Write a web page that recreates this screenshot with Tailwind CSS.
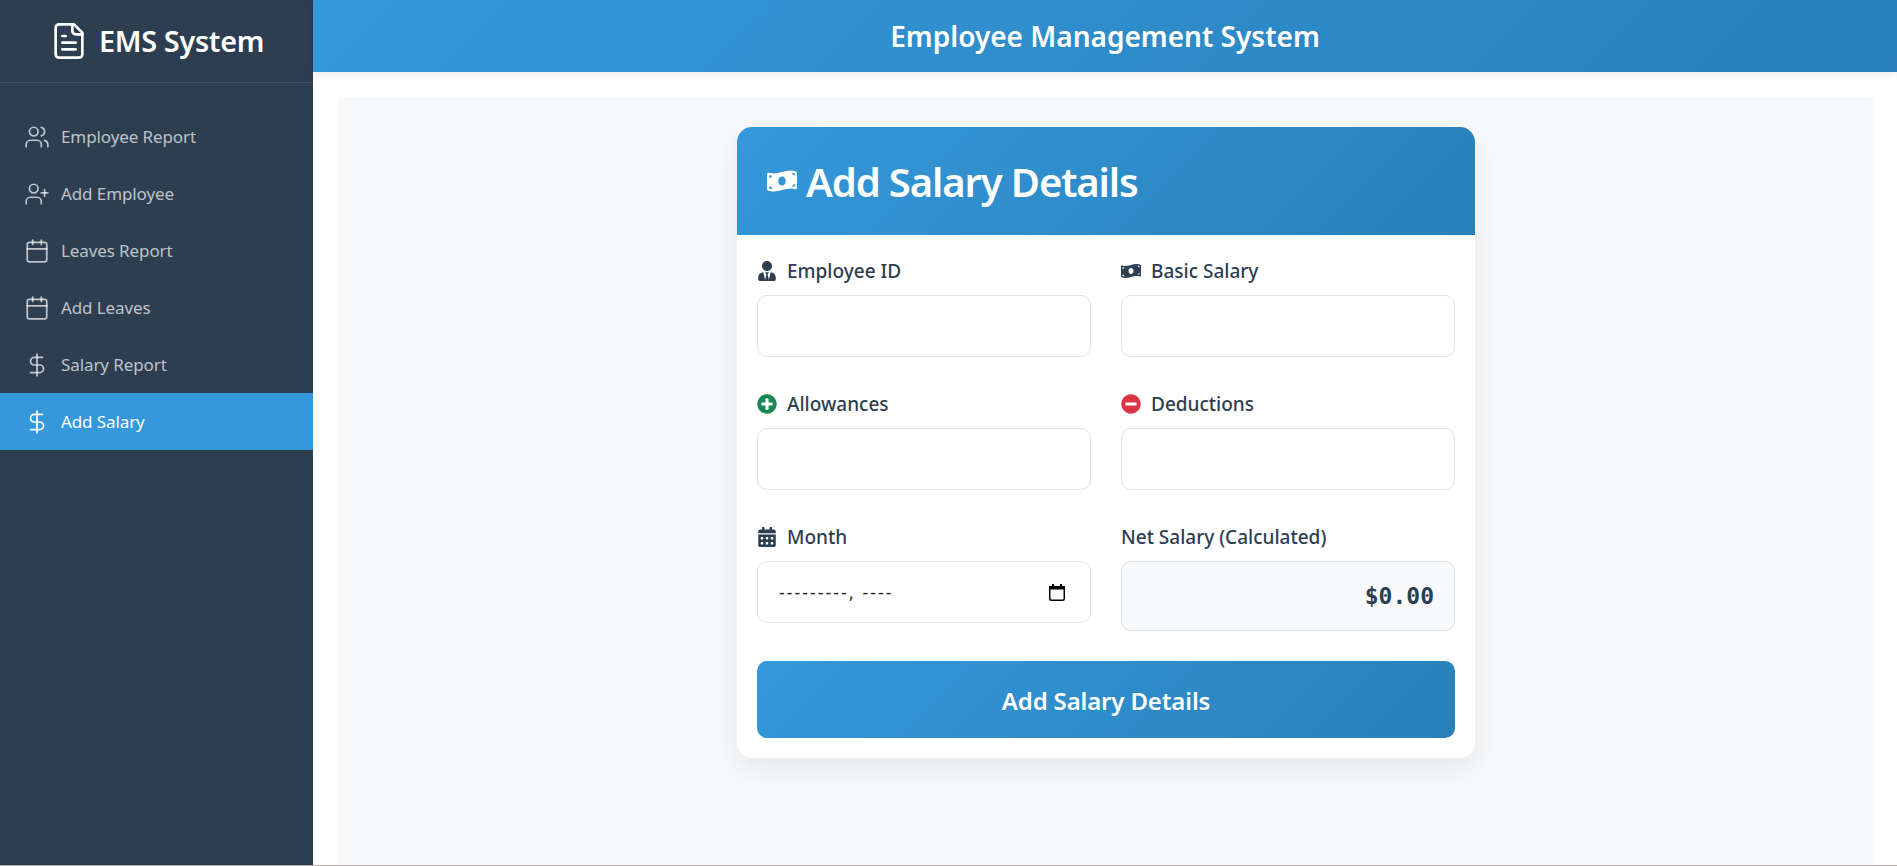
<!DOCTYPE html>
<html lang="en">
<head>
    <meta charset="UTF-8">
    <meta name="viewport" content="width=device-width, initial-scale=1.0">
    <title>Employee Management System</title>
    <script src="https://cdn.jsdelivr.net/npm/@tailwindcss/browser@4"></script>
</head>
<body class="bg-white font-['Noto_Sans',sans-serif] text-[#2c3e50] overflow-hidden">
    <div class="flex h-[865px] w-full">
        <!-- Sidebar -->
        <aside class="w-[313px] shrink-0 bg-[#2c3e50] text-white">
            <div class="h-[83px] border-b border-white/10 flex items-center justify-center gap-[10px]">
                <svg class="w-[40px] h-[40px]" viewBox="0 0 24 24" fill="none" stroke="currentColor" stroke-width="1.6" stroke-linecap="round" stroke-linejoin="round"><path d="M15 2H6a2 2 0 0 0-2 2v16a2 2 0 0 0 2 2h12a2 2 0 0 0 2-2V7Z"/><path d="M14 2v4a2 2 0 0 0 2 2h4"/><path d="M10 9H8"/><path d="M16 13H8"/><path d="M16 17H8"/></svg>
                <span class="text-[28.8px] font-semibold tracking-[-0.3px]">EMS System</span>
            </div>
            <nav class="pt-[25px] text-[17px] tracking-[-0.1px]">
                <a class="h-[57px] pl-[24px] flex items-center gap-[11px] text-white/70">
                    <svg class="w-[26px] h-[26px] shrink-0" viewBox="0 0 24 24" fill="none" stroke="currentColor" stroke-width="1.6" stroke-linecap="round" stroke-linejoin="round"><path d="M16 21v-2a4 4 0 0 0-4-4H6a4 4 0 0 0-4 4v2"/><circle cx="9" cy="7" r="4"/><path d="M22 21v-2a4 4 0 0 0-3-3.87"/><path d="M16 3.13a4 4 0 0 1 0 7.75"/></svg>
                    Employee Report
                </a>
                <a class="h-[57px] pl-[24px] flex items-center gap-[11px] text-white/70">
                    <svg class="w-[26px] h-[26px] shrink-0" viewBox="0 0 24 24" fill="none" stroke="currentColor" stroke-width="1.6" stroke-linecap="round" stroke-linejoin="round"><path d="M16 21v-2a4 4 0 0 0-4-4H6a4 4 0 0 0-4 4v2"/><circle cx="9" cy="7" r="4"/><line x1="19" y1="8" x2="19" y2="14"/><line x1="22" y1="11" x2="16" y2="11"/></svg>
                    Add Employee
                </a>
                <a class="h-[57px] pl-[24px] flex items-center gap-[11px] text-white/70">
                    <svg class="w-[26px] h-[26px] shrink-0" viewBox="0 0 24 24" fill="none" stroke="currentColor" stroke-width="1.6" stroke-linecap="round" stroke-linejoin="round"><path d="M8 2v4"/><path d="M16 2v4"/><rect x="3" y="4" width="18" height="18" rx="2"/><path d="M3 10h18"/></svg>
                    Leaves Report
                </a>
                <a class="h-[57px] pl-[24px] flex items-center gap-[11px] text-white/70">
                    <svg class="w-[26px] h-[26px] shrink-0" viewBox="0 0 24 24" fill="none" stroke="currentColor" stroke-width="1.6" stroke-linecap="round" stroke-linejoin="round"><path d="M8 2v4"/><path d="M16 2v4"/><rect x="3" y="4" width="18" height="18" rx="2"/><path d="M3 10h18"/></svg>
                    Add Leaves
                </a>
                <a class="h-[57px] pl-[24px] flex items-center gap-[11px] text-white/70">
                    <svg class="w-[26px] h-[26px] shrink-0" viewBox="0 0 24 24" fill="none" stroke="currentColor" stroke-width="1.6" stroke-linecap="round" stroke-linejoin="round"><line x1="12" y1="2" x2="12" y2="22"/><path d="M17 5H9.5a3.5 3.5 0 0 0 0 7h5a3.5 3.5 0 0 1 0 7H6"/></svg>
                    Salary Report
                </a>
                <a class="h-[57px] pl-[24px] flex items-center gap-[11px] bg-[#3498db] text-white">
                    <svg class="w-[26px] h-[26px] shrink-0" viewBox="0 0 24 24" fill="none" stroke="currentColor" stroke-width="1.6" stroke-linecap="round" stroke-linejoin="round"><line x1="12" y1="2" x2="12" y2="22"/><path d="M17 5H9.5a3.5 3.5 0 0 0 0 7h5a3.5 3.5 0 0 1 0 7H6"/></svg>
                    Add Salary
                </a>
            </nav>
        </aside>

        <!-- Main -->
        <div class="flex-1 flex flex-col min-w-0">
            <header class="relative h-[72px] shrink-0 flex items-center justify-center bg-linear-[135deg,#3498db,#2980b9] text-white text-[28px] font-semibold shadow-[0_2px_10px_rgba(0,0,0,0.1)]">
                Employee Management System
            </header>
            <main class="flex-1 ml-[25px] mr-[23px] mt-[25px] bg-[#f8f9fa] pt-[30px]">
                <div class="w-[738px] mx-auto bg-white rounded-[15px] overflow-hidden shadow-[0_10px_30px_rgba(0,0,0,0.08)]">
                    <div class="h-[108px] flex items-center gap-[9px] pl-[30px] bg-linear-[135deg,#3498db,#2980b9] text-white">
                        <svg class="w-[30px] h-[24px] shrink-0" viewBox="0 0 640 512" fill="currentColor"><path d="M621.16 54.46C582.37 38.19 543.55 32 504.75 32c-123.17-.01-246.33 62.34-369.5 62.34-30.89 0-61.76-3.92-92.65-13.72-3.47-1.1-6.95-1.62-10.35-1.62C15.04 79 0 92.32 0 110.81v317.26c0 12.63 7.23 24.6 18.84 29.46C57.63 473.81 96.45 480 135.25 480c123.17 0 246.34-62.35 369.51-62.35 30.89 0 61.76 3.92 92.65 13.72 3.47 1.1 6.95 1.62 10.35 1.62 17.21 0 32.25-13.32 32.25-31.81V83.93c-.01-12.64-7.24-24.6-18.85-29.47zM48 132.22c20.12 5.04 41.12 7.57 62.72 8.93C104.84 170.54 79 192.69 48 192.69v-60.47zm0 285.2v-47.78c34.37 0 62.18 27.27 63.71 61.4-22.53-1.81-43.59-6.31-63.71-13.62zM320 352c-44.19 0-80-42.99-80-96 0-53.02 35.82-96 80-96s80 42.98 80 96c0 53.03-35.83 96-80 96zm272 27.78c-17.52-4.39-35.71-6.85-54.32-8.44 5.87-26.08 27.5-45.88 54.32-49.28v57.72zm0-236.11c-30.89-3.91-54.86-29.7-55.81-61.55 19.54 2.17 38.09 6.23 55.81 12.66v48.89z"/></svg>
                        <h1 class="text-[40px] leading-none font-semibold tracking-[-1.13px] pt-[2px]">Add Salary Details</h1>
                    </div>
                    <form class="px-[20px] pt-[24px] pb-[20px]">
                        <div class="grid grid-cols-2 gap-x-[30px] gap-y-[35px]">
                            <div>
                                <label class="h-[24px] mb-[12px] flex items-center gap-[10px] text-[19px] font-medium">
                                    <svg class="w-[20px] h-[20px] shrink-0" viewBox="0 0 512 512" fill="currentColor"><path transform="translate(32 0)" d="M224 256c70.7 0 128-57.3 128-128S294.7 0 224 0 96 57.3 96 128s57.3 128 128 128zm95.8 32.6L272 480l-32-136 32-56h-96l32 56-32 136-47.8-191.4C56.9 292 0 350.3 0 422.4V464c0 26.5 21.5 48 48 48h352c26.5 0 48-21.5 48-48v-41.6c0-72.1-56.9-130.4-128.2-133.8z"/></svg>
                                    Employee ID
                                </label>
                                <input type="text" class="block w-full h-[62px] border border-[#dee2e6] rounded-[10px] bg-white px-[20px]">
                            </div>
                            <div>
                                <label class="h-[24px] mb-[12px] flex items-center gap-[10px] text-[19px] font-medium">
                                    <svg class="w-[20px] h-[20px] shrink-0" viewBox="0 0 640 512" fill="currentColor"><path d="M621.16 54.46C582.37 38.19 543.55 32 504.75 32c-123.17-.01-246.33 62.34-369.5 62.34-30.89 0-61.76-3.92-92.65-13.72-3.47-1.1-6.95-1.62-10.35-1.62C15.04 79 0 92.32 0 110.81v317.26c0 12.63 7.23 24.6 18.84 29.46C57.63 473.81 96.45 480 135.25 480c123.17 0 246.34-62.35 369.51-62.35 30.89 0 61.76 3.92 92.65 13.72 3.47 1.1 6.95 1.62 10.35 1.62 17.21 0 32.25-13.32 32.25-31.81V83.93c-.01-12.64-7.24-24.6-18.85-29.47zM48 132.22c20.12 5.04 41.12 7.57 62.72 8.93C104.84 170.54 79 192.69 48 192.69v-60.47zm0 285.2v-47.78c34.37 0 62.18 27.27 63.71 61.4-22.53-1.81-43.59-6.31-63.71-13.62zM320 352c-44.19 0-80-42.99-80-96 0-53.02 35.82-96 80-96s80 42.98 80 96c0 53.03-35.83 96-80 96zm272 27.78c-17.52-4.39-35.71-6.85-54.32-8.44 5.87-26.08 27.5-45.88 54.32-49.28v57.72zm0-236.11c-30.89-3.91-54.86-29.7-55.81-61.55 19.54 2.17 38.09 6.23 55.81 12.66v48.89z"/></svg>
                                    Basic Salary
                                </label>
                                <input type="text" class="block w-full h-[62px] border border-[#dee2e6] rounded-[10px] bg-white px-[20px]">
                            </div>
                            <div>
                                <label class="h-[24px] mb-[12px] flex items-center gap-[10px] text-[19px] font-medium">
                                    <svg class="w-[20px] h-[20px] shrink-0 text-[#198754]" viewBox="0 0 512 512" fill="currentColor"><path d="M256 8C119 8 8 119 8 256s111 248 248 248 248-111 248-248S393 8 256 8zm144 276c0 6.6-5.4 12-12 12h-92v92c0 6.6-5.4 12-12 12h-56c-6.6 0-12-5.4-12-12v-92h-92c-6.6 0-12-5.4-12-12v-56c0-6.6 5.4-12 12-12h92v-92c0-6.6 5.4-12 12-12h56c6.6 0 12 5.4 12 12v92h92c6.6 0 12 5.4 12 12v56z"/></svg>
                                    Allowances
                                </label>
                                <input type="text" class="block w-full h-[62px] border border-[#dee2e6] rounded-[10px] bg-white px-[20px]">
                            </div>
                            <div>
                                <label class="h-[24px] mb-[12px] flex items-center gap-[10px] text-[19px] font-medium">
                                    <svg class="w-[20px] h-[20px] shrink-0 text-[#dc3545]" viewBox="0 0 512 512" fill="currentColor"><path d="M256 8C119 8 8 119 8 256s111 248 248 248 248-111 248-248S393 8 256 8zM124 296c-6.6 0-12-5.4-12-12v-56c0-6.6 5.4-12 12-12h264c6.6 0 12 5.4 12 12v56c0 6.6-5.4 12-12 12H124z"/></svg>
                                    Deductions
                                </label>
                                <input type="text" class="block w-full h-[62px] border border-[#dee2e6] rounded-[10px] bg-white px-[20px]">
                            </div>
                            <div>
                                <label class="h-[24px] mb-[12px] flex items-center gap-[10px] text-[19px] font-medium">
                                    <svg class="w-[20px] h-[20px] shrink-0" viewBox="0 0 512 512" fill="currentColor"><path transform="translate(32 0)" d="M0 464c0 26.5 21.5 48 48 48h352c26.5 0 48-21.5 48-48V192H0v272zm320-196c0-6.6 5.4-12 12-12h40c6.6 0 12 5.4 12 12v40c0 6.6-5.4 12-12 12h-40c-6.6 0-12-5.4-12-12v-40zm0 128c0-6.6 5.4-12 12-12h40c6.6 0 12 5.4 12 12v40c0 6.6-5.4 12-12 12h-40c-6.6 0-12-5.4-12-12v-40zM192 268c0-6.6 5.4-12 12-12h40c6.6 0 12 5.4 12 12v40c0 6.6-5.4 12-12 12h-40c-6.6 0-12-5.4-12-12v-40zm0 128c0-6.6 5.4-12 12-12h40c6.6 0 12 5.4 12 12v40c0 6.6-5.4 12-12 12h-40c-6.6 0-12-5.4-12-12v-40zM64 268c0-6.6 5.4-12 12-12h40c6.6 0 12 5.4 12 12v40c0 6.6-5.4 12-12 12H76c-6.6 0-12-5.4-12-12v-40zm0 128c0-6.6 5.4-12 12-12h40c6.6 0 12 5.4 12 12v40c0 6.6-5.4 12-12 12H76c-6.6 0-12-5.4-12-12v-40zM400 64h-48V16c0-8.8-7.2-16-16-16h-32c-8.8 0-16 7.2-16 16v48H160V16c0-8.8-7.2-16-16-16h-32c-8.8 0-16 7.2-16 16v48H48C21.5 64 0 85.5 0 112v48h448v-48c0-26.5-21.5-48-48-48z"/></svg>
                                    Month
                                </label>
                                <div class="h-[62px] border border-[#dee2e6] rounded-[10px] bg-white pl-[21px] pr-[25px] flex items-center justify-between">
                                    <span class="text-[17.6px] tracking-[2.1px] text-[#212529]">---------, ----</span>
                                    <svg class="w-[16px] h-[17px] shrink-0" viewBox="0 0 16 17"><rect x="0.75" y="2.75" width="14.5" height="13.5" rx="1.5" fill="none" stroke="#000" stroke-width="1.5"/><rect x="0" y="2" width="16" height="3.5" fill="#000"/><rect x="3" y="0" width="2" height="3" fill="#000"/><rect x="11" y="0" width="2" height="3" fill="#000"/></svg>
                                </div>
                            </div>
                            <div>
                                <label class="h-[24px] mb-[12px] flex items-center text-[19px] font-medium">Net Salary (Calculated)</label>
                                <div class="h-[70px] border border-[#dee2e6] rounded-[10px] bg-[#f8f9fa] px-[20px] flex items-center justify-end font-['DejaVu_Sans_Mono','Liberation_Mono',monospace] text-[23px] font-bold">$0.00</div>
                            </div>
                        </div>
                        <button type="button" class="block w-full h-[77px] mt-[30px] pt-[2px] rounded-[10px] bg-linear-[135deg,#3498db,#2980b9] text-white text-[24px] font-semibold tracking-[-0.15px]">Add Salary Details</button>
                    </form>
                </div>
            </main>
        </div>
    </div>
    <div class="h-px bg-[#b5b0b0]"></div>
</body>
</html>
